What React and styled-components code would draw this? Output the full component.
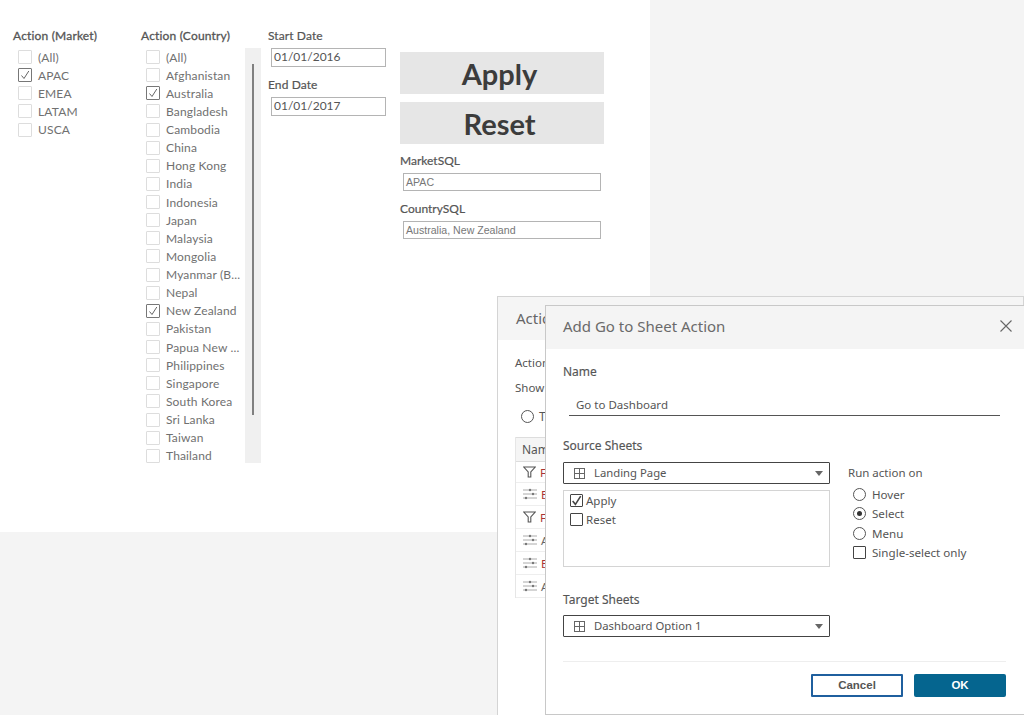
import React from 'react'
import styled, { createGlobalStyle } from 'styled-components'

const markets = ['(All)', 'APAC', 'EMEA', 'LATAM', 'USCA']
const countries = ['(All)', 'Afghanistan', 'Australia', 'Bangladesh', 'Cambodia', 'China', 'Hong Kong', 'India', 'Indonesia', 'Japan', 'Malaysia', 'Mongolia', 'Myanmar (B...', 'Nepal', 'New Zealand', 'Pakistan', 'Papua New ...', 'Philippines', 'Singapore', 'South Korea', 'Sri Lanka', 'Taiwan', 'Thailand']
const checkedFilters = ['APAC', 'Australia', 'New Zealand']

function Tick({ size = 10, width = 1, color = '#666' }) {
    return (
        <svg width={size} height={size} viewBox="0 0 10 10" fill="none">
            <path d="M1.5 5.5 L4 8.5 L8.8 1" stroke={color} strokeWidth={width} />
        </svg>
    )
}

function SheetIcon() {
    return (
        <svg width="11" height="11" viewBox="0 0 11 11" fill="none" stroke="#666" strokeWidth="1">
            <rect x="0.5" y="0.5" width="10" height="10" />
            <path d="M5.5 0.5 V10.5 M0.5 5.5 H10.5" />
        </svg>
    )
}

function FunnelIcon() {
    return (
        <svg width="13" height="12" viewBox="0 0 13 12" fill="none" stroke="#555" strokeWidth="1.1">
            <path d="M0.8 1 H12.2 L7.8 6 V11 H5.2 V6 Z" />
        </svg>
    )
}

function SliderIcon() {
    return (
        <svg width="14" height="12" viewBox="0 0 14 12" fill="none" stroke="#aaa" strokeWidth="1">
            <path d="M0 2 H14 M0 6 H14 M0 10 H14" />
            <circle cx="7" cy="2" r="1.2" fill="#777" stroke="none" />
            <circle cx="10" cy="6" r="1.2" fill="#777" stroke="none" />
            <circle cx="3" cy="10" r="1.2" fill="#777" stroke="none" />
        </svg>
    )
}

function Select({ value }) {
    return (
        <SelectBox>
            <SheetIcon />
            <SelectText>{value}</SelectText>
            <Caret />
        </SelectBox>
    )
}

function FilterList({ title, items }) {
    return (
        <>
            <FilterTitle>{title}</FilterTitle>
            {items.map(item => {
                const on = checkedFilters.includes(item)
                return (
                    <FilterRow key={item}>
                        <FilterBox $on={on}>{on && <Tick />}</FilterBox>
                        <FilterLabel>{item}</FilterLabel>
                    </FilterRow>
                )
            })}
        </>
    )
}

export default function App() {
    return (
        <>
            <GlobalStyle />
            <Page>
                <Dashboard>
                    <MarketColumn>
                        <FilterList title="Action (Market)" items={markets} />
                    </MarketColumn>
                    <CountryColumn>
                        <FilterList title="Action (Country)" items={countries} />
                        <ScrollTrack><ScrollThumb /></ScrollTrack>
                    </CountryColumn>
                    <DateColumn>
                        <FieldTitle>Start Date</FieldTitle>
                        <DateInput>01/01/2016</DateInput>
                        <FieldTitle $gap={11}>End Date</FieldTitle>
                        <DateInput>01/01/2017</DateInput>
                    </DateColumn>
                    <ActionColumn>
                        <BigButton>Apply</BigButton>
                        <BigButton>Reset</BigButton>
                        <SqlTitle>MarketSQL</SqlTitle>
                        <SqlInput>APAC</SqlInput>
                        <SqlTitle $gap={9}>CountrySQL</SqlTitle>
                        <SqlInput>Australia, New Zealand</SqlInput>
                    </ActionColumn>
                </Dashboard>

                <BackDialog>
                    <BackHeader>Actions</BackHeader>
                    <BackBody>
                        <BackLine>Actions</BackLine>
                        <BackLine $gap={10}>Show</BackLine>
                        <BackRadioRow><Radio /><span>T</span></BackRadioRow>
                        <BackTable>
                            <BackHead>Name</BackHead>
                            <BackRow $h={21}><FunnelIcon /><RedLetter>F</RedLetter></BackRow>
                            <BackRow><SliderIcon /><RedLetter>E</RedLetter></BackRow>
                            <BackRow><FunnelIcon /><RedLetter>F</RedLetter></BackRow>
                            <BackRow><SliderIcon /><RedLetter $plain>A</RedLetter></BackRow>
                            <BackRow><SliderIcon /><RedLetter>E</RedLetter></BackRow>
                            <BackRow><SliderIcon /><RedLetter $plain>A</RedLetter></BackRow>
                        </BackTable>
                    </BackBody>
                </BackDialog>

                <Dialog>
                    <DialogHeader>
                        <DialogTitle>Add Go to Sheet Action</DialogTitle>
                        <CloseIcon width="12" height="12" viewBox="0 0 12 12">
                            <path d="M0.5 0.5 L11.5 11.5 M11.5 0.5 L0.5 11.5" stroke="#666" strokeWidth="1.1" />
                        </CloseIcon>
                    </DialogHeader>
                    <DialogBody>
                        <SectionLabel>Name</SectionLabel>
                        <NameField>Go to Dashboard</NameField>
                        <SectionLabel $gap={22}>Source Sheets</SectionLabel>
                        <SourceRow>
                            <SourceColumn>
                                <Select value="Landing Page" />
                                <SheetList>
                                    <SheetRow><SheetCheck><Tick size={11} width={1.4} color="#444" /></SheetCheck>Apply</SheetRow>
                                    <SheetRow><SheetCheck />Reset</SheetRow>
                                </SheetList>
                            </SourceColumn>
                            <RunColumn>
                                <RunTitle>Run action on</RunTitle>
                                <RunOption><Radio />Hover</RunOption>
                                <RunOption><Radio $on />Select</RunOption>
                                <RunOption><Radio />Menu</RunOption>
                                <RunOption><SheetCheck />Single-select only</RunOption>
                            </RunColumn>
                        </SourceRow>
                        <SectionLabel $gap={25}>Target Sheets</SectionLabel>
                        <TargetSelect><Select value="Dashboard Option 1" /></TargetSelect>
                        <Footer>
                            <CancelButton>Cancel</CancelButton>
                            <OkButton>OK</OkButton>
                        </Footer>
                    </DialogBody>
                </Dialog>
            </Page>
        </>
    )
}

const GlobalStyle = createGlobalStyle`
    html, body {
        margin: 0;
        padding: 0;
        background: #f4f4f4;
    }
    * {
        box-sizing: border-box;
    }
`

const Page = styled.div`
    position: relative;
    width: 1024px;
    height: 715px;
    overflow: hidden;
    background: #f4f4f4;
`

const Dashboard = styled.div`
    display: flex;
    width: 650px;
    height: 532px;
    background: #fff;
    font-family: Lato, "Open Sans", sans-serif;
`

const MarketColumn = styled.div`
    width: 141px;
    padding: 29px 0 0 13px;
`

const CountryColumn = styled.div`
    position: relative;
    width: 127px;
    padding-top: 29px;
`

const FilterTitle = styled.div`
    height: 19px;
    font-size: 12px;
    line-height: 14px;
    color: #555;
    -webkit-text-stroke: 0.3px #555;
    letter-spacing: 0.18px;
    white-space: nowrap;
`

const FilterRow = styled.div`
    display: flex;
    align-items: center;
    height: 18.14px;
    padding-left: 5px;
`

const FilterBox = styled.div`
    display: flex;
    align-items: center;
    justify-content: center;
    width: 14px;
    height: 14px;
    margin-right: 6px;
    border: 1px solid ${props => (props.$on ? '#777' : '#ddd')};
    border-radius: 1px;
    background: #fff;
`

const FilterLabel = styled.span`
    font-size: 12px;
    color: #707070;
    letter-spacing: 0.15px;
    white-space: nowrap;
`

const ScrollTrack = styled.div`
    position: absolute;
    left: 104px;
    top: 48px;
    width: 16px;
    height: 415px;
    padding: 16px 0 0 7px;
    background: #f0f0f0;
`

const ScrollThumb = styled.div`
    width: 2px;
    height: 351px;
    background: #808080;
`

const DateColumn = styled.div`
    width: 132px;
    padding-top: 29px;
`

const FieldTitle = styled.div`
    height: 19px;
    margin-top: ${props => props.$gap || 0}px;
    font-size: 12px;
    line-height: 14px;
    color: #555;
    -webkit-text-stroke: 0.2px #555;
    letter-spacing: 0.1px;
`

const DateInput = styled.div`
    width: 115px;
    height: 19px;
    margin-left: 3px;
    padding-left: 2px;
    border: 1px solid #b4b4b4;
    font-size: 12px;
    line-height: 16px;
    color: #555;
`

const ActionColumn = styled.div`
    width: 204px;
    padding-top: 52px;
`

const BigButton = styled.div`
    height: 42px;
    margin-bottom: 8px;
    padding-right: 5px;
    background: #e6e6e6;
    font-family: Lato, sans-serif;
    font-size: 29px;
    line-height: 44px;
    font-weight: 700;
    text-align: center;
    color: #3c3c3c;
`

const SqlTitle = styled(FieldTitle)`
    height: 21px;
    line-height: 17px;
    letter-spacing: 0;
`

const SqlInput = styled.div`
    width: 198px;
    height: 18px;
    margin-left: 3px;
    padding-left: 2px;
    border: 1px solid #b4b4b4;
    font-family: "Liberation Sans", Arial, sans-serif;
    font-size: 10.6px;
    line-height: 16px;
    color: #777;
`

const BackDialog = styled.div`
    position: absolute;
    left: 497px;
    top: 296px;
    width: 527px;
    height: 430px;
    background: #fff;
    border: 1px solid #d4d4d4;
    font-family: "Noto Sans", sans-serif;
    color: #555;
`

const BackHeader = styled.div`
    height: 43px;
    padding: 11px 0 0 18px;
    background: #f5f5f5;
    font-size: 15px;
    line-height: 20px;
    color: #666;
`

const BackBody = styled.div`
    padding: 15px 0 0 17px;
`

const BackLine = styled.div`
    margin-top: ${props => props.$gap || 0}px;
    font-size: 11.5px;
    line-height: 15px;
`

const BackRadioRow = styled.div`
    display: flex;
    align-items: center;
    gap: 5px;
    height: 16px;
    margin: 13px 0 13px 6px;
    font-size: 12px;
`

const BackTable = styled.div`
    width: 40px;
    border-left: 1px solid #e6e6e6;
`

const BackHead = styled.div`
    height: 25px;
    padding: 4px 0 0 6px;
    background: #f5f5f5;
    border-top: 1px solid #ddd;
    border-bottom: 1px solid #ddd;
    font-size: 12px;
    line-height: 16px;
`

const BackRow = styled.div`
    display: flex;
    align-items: center;
    gap: 4px;
    height: ${props => props.$h || 23}px;
    padding-left: 7px;
    border-bottom: 1px solid #eee;
`

const RedLetter = styled.span`
    font-size: 11.5px;
    color: ${props => (props.$plain ? '#666' : '#a33')};
`

const Dialog = styled.div`
    position: absolute;
    left: 545px;
    top: 305px;
    width: 479px;
    height: 410px;
    background: #fff;
    border: 1px solid #c8c8c8;
    border-right: 0;
    font-family: "Noto Sans", sans-serif;
    color: #555;
`

const DialogHeader = styled.div`
    display: flex;
    align-items: center;
    justify-content: space-between;
    height: 43px;
    padding: 0 12px 4px 17px;
    background: #f4f4f4;
`

const DialogTitle = styled.div`
    font-size: 15px;
    color: #6a6a6a;
`

const CloseIcon = styled.svg`
    display: block;
`

const DialogBody = styled.div`
    padding: 15px 18px 0 17px;
`

const SectionLabel = styled.div`
    margin-top: ${props => props.$gap || 0}px;
    font-size: 12px;
    line-height: 16px;
    color: #555;
    -webkit-text-stroke: 0.15px #555;
`

const NameField = styled.div`
    width: 431px;
    height: 20px;
    margin: 16px 0 0 6px;
    padding-left: 7px;
    border-bottom: 1px solid #555;
    font-size: 11.5px;
    line-height: 17px;
    color: #555;
`

const SourceRow = styled.div`
    display: flex;
    margin-top: 8px;
`

const SourceColumn = styled.div`
    width: 267px;
`

const SelectBox = styled.div`
    display: flex;
    align-items: center;
    width: 267px;
    height: 22px;
    padding: 0 5px 0 10px;
    border: 1px solid #444;
    border-radius: 1px;
`

const SelectText = styled.span`
    flex: 1;
    margin: 0 0 1px 9px;
    font-size: 11.3px;
    line-height: 15px;
    color: #555;
`

const Caret = styled.span`
    width: 0;
    height: 0;
    margin-right: 1px;
    border-left: 4px solid transparent;
    border-right: 4px solid transparent;
    border-top: 5px solid #666;
`

const SheetList = styled.div`
    height: 77px;
    margin-top: 6px;
    padding: 0 6px;
    border: 1px solid #d4d4d4;
`

const SheetRow = styled.div`
    display: flex;
    align-items: center;
    gap: 3px;
    height: 19px;
    font-size: 11.5px;
    color: #555;
`

const SheetCheck = styled.span`
    display: inline-flex;
    flex: none;
    align-items: center;
    justify-content: center;
    width: 13px;
    height: 13px;
    border: 1px solid #444;
    border-radius: 1px;
`

const RunColumn = styled.div`
    margin: -1px 0 0 18px;
`

const RunTitle = styled.div`
    height: 22px;
    margin-bottom: 2px;
    font-size: 11.5px;
    line-height: 23px;
`

const RunOption = styled.div`
    display: flex;
    align-items: center;
    gap: 6px;
    height: 19.3px;
    margin-left: 5px;
    font-size: 11.6px;
    white-space: nowrap;
`

const Radio = styled.span`
    display: inline-flex;
    flex: none;
    align-items: center;
    justify-content: center;
    width: 13px;
    height: 13px;
    border: 1px solid #555;
    border-radius: 50%;
    &::after {
        content: '';
        display: ${props => (props.$on ? 'block' : 'none')};
        width: 5px;
        height: 5px;
        border-radius: 50%;
        background: #333;
    }
`

const TargetSelect = styled.div`
    margin-top: 7px;
`

const Footer = styled.div`
    display: flex;
    justify-content: flex-end;
    gap: 11px;
    margin-top: 24px;
    padding-top: 12px;
    border-top: 1px solid #eee;
`

const CancelButton = styled.div`
    width: 92px;
    height: 23px;
    border: 2px solid #1f5f9e;
    border-radius: 1px;
    font-family: "Liberation Sans", Arial, sans-serif;
    font-size: 11.5px;
    font-weight: 700;
    line-height: 19px;
    text-align: center;
    color: #555;
`

const OkButton = styled.div`
    width: 92px;
    height: 23px;
    border-radius: 2px;
    background: #05658f;
    font-family: "Liberation Sans", Arial, sans-serif;
    font-size: 11.5px;
    font-weight: 700;
    line-height: 23px;
    text-align: center;
    color: #fff;
`
